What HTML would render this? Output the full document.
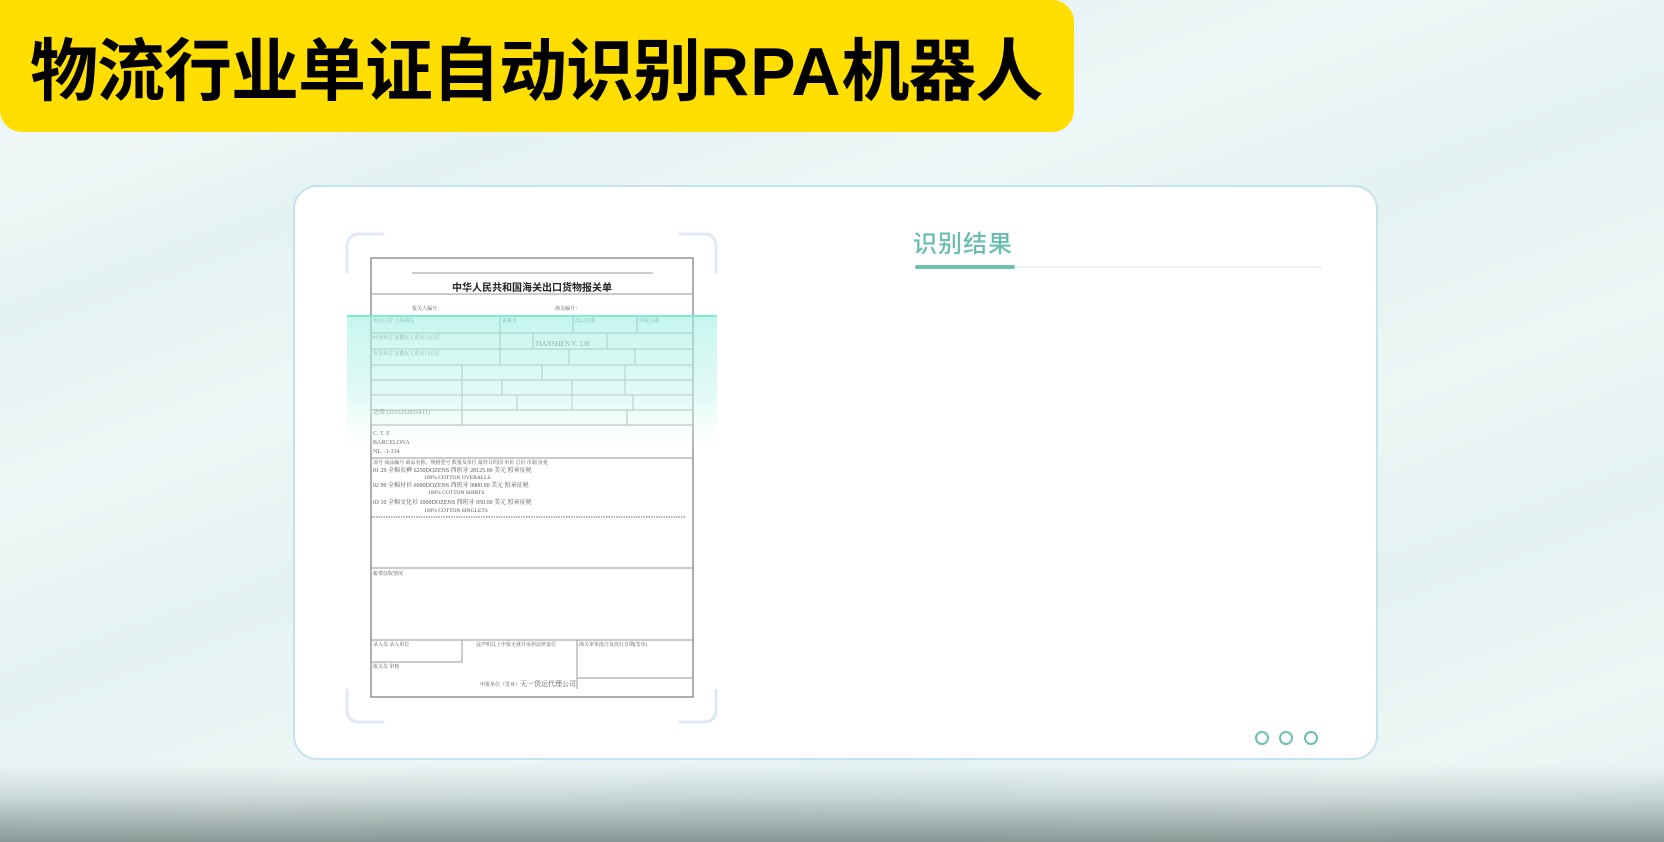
<!DOCTYPE html>
<html><head><meta charset="utf-8"><style>
html,body{margin:0;padding:0}
body{width:1664px;height:842px;position:relative;overflow:hidden;background:#e4f2f1;font-family:"Liberation Sans","Noto Sans CJK SC",sans-serif}
.bg{position:absolute;inset:0;background:
linear-gradient(160deg,rgba(255,255,255,0) 0%,rgba(255,255,255,.45) 12%,rgba(255,255,255,0) 22%,rgba(255,255,255,.35) 35%,rgba(255,255,255,0) 48%,rgba(255,255,255,.3) 62%,rgba(255,255,255,0) 75%,rgba(255,255,255,.3) 88%,rgba(255,255,255,0) 100%);}
.shade{position:absolute;left:0;right:0;top:765px;height:77px;background:linear-gradient(180deg,rgba(140,155,153,0) 0%,rgba(150,168,166,.35) 40%,rgba(120,135,133,.85) 100%)}
.banner{position:absolute;left:0;top:0;width:1074px;height:132px;background:#ffde00;border-radius:0 22px 22px 22px}
.title{position:absolute;left:30px;top:22px;font-size:68px;font-weight:bold;letter-spacing:-1px;color:#000;white-space:nowrap;line-height:88px;font-family:"Noto Sans CJK SC",sans-serif}
.title span{font-family:"Liberation Sans",sans-serif;letter-spacing:1px}
.card{position:absolute;left:293px;top:185px;width:1081px;height:571px;background:#fff;border:2px solid #c4e3ec;border-radius:24px}
.res{position:absolute;left:913px;top:224px;font-size:24px;font-weight:500;color:#6bbdaf;font-family:"Noto Sans CJK SC",sans-serif;letter-spacing:1px}
.ln{position:absolute;left:915px;top:266px;width:407px;height:2px;background:#edf1fb}
.ln2{position:absolute;left:915px;top:265px;width:100px;height:4px;background:#6dbfb0;border-radius:2px}
.dot{position:absolute;top:731px;width:10px;height:10px;border:2.5px solid #6dbfb0;border-radius:50%}
</style></head><body>
<div class="bg"></div>
<div class="shade"></div>
<div class="banner"></div>
<div class="title">物流行业单证自动识别<span>RPA</span>机器人</div>
<div class="card"></div>
<div class="res">识别结果</div>
<div class="ln"></div><div class="ln2"></div>
<div class="dot" style="left:1255px"></div>
<div class="dot" style="left:1279px"></div>
<div class="dot" style="left:1304px"></div>
<svg width="1664" height="842" style="position:absolute;left:0;top:0" font-family="Liberation Serif,Noto Serif CJK SC,serif">
<defs><linearGradient id="tg" x1="0" y1="0" x2="0" y2="1"><stop offset="0" stop-color="#9ff0e2" stop-opacity=".6"/><stop offset=".6" stop-color="#cff6ef" stop-opacity=".55"/><stop offset="1" stop-color="#ffffff" stop-opacity="0"/></linearGradient></defs>
<g fill="none" stroke="#e2e7f4" stroke-width="3" stroke-linecap="round">
<path d="M383 234 H360 Q347 234 347 247 V272"/>
<path d="M680 234 H703 Q716 234 716 247 V272"/>
<path d="M383 722 H360 Q347 722 347 709 V690"/>
<path d="M680 722 H703 Q716 722 716 709 V690"/>
</g>
<rect x="371" y="258" width="322" height="439" fill="#fff" stroke="#777" stroke-width="1.2"/>
<g stroke="#999" stroke-width="1" fill="none">
<line x1="412" y1="273" x2="653" y2="273"/>
<line x1="371" y1="294" x2="693" y2="294"/>
<line x1="371" y1="316" x2="693" y2="316"/>
<line x1="371" y1="333" x2="693" y2="333"/>
<line x1="371" y1="349" x2="693" y2="349"/>
<line x1="371" y1="365" x2="693" y2="365"/>
<line x1="371" y1="380" x2="693" y2="380"/>
<line x1="371" y1="395" x2="693" y2="395"/>
<line x1="371" y1="410" x2="693" y2="410"/>
<line x1="371" y1="425" x2="693" y2="425"/>
<path d="M500 316V333M573 316V333M637 316V333M500 333V349M533 333V349M607 333V349M500 349V365M569 349V365M635 349V365M462 365V380M542 365V380M625 365V380M462 380V395M502 380V395M572 380V395M625 380V395M462 395V410M517 395V410M572 395V410M633 395V410M462 410V425M627 410V425"/>
<line x1="371" y1="458" x2="693" y2="458"/>
<line x1="371" y1="517" x2="685" y2="517" stroke-dasharray="1.5 1" stroke="#666"/>
<line x1="371" y1="568" x2="693" y2="568"/>
<line x1="371" y1="640" x2="693" y2="640"/>
<path d="M462 640V662H371M577 640V689M577 678H693"/>
</g>
<text x="532" y="291" font-size="10" font-weight="bold" text-anchor="middle" font-family="Noto Sans CJK SC,sans-serif" fill="#222">中华人民共和国海关出口货物报关单</text>
<g font-size="5" fill="#555">
<text x="412" y="310">报关人编号：</text><text x="555" y="310">海关编号：</text>
<text x="373" y="322">出口口岸 上海海关</text><text x="502" y="322">备案号</text><text x="575" y="322">出口日期</text><text x="639" y="322">申报日期</text>
<text x="373" y="339">经营单位 安徽化工进出口公司</text><text x="535" y="346" font-size="7">TIANSHEN  Y. 138</text>
<text x="373" y="355">发货单位 安徽化工进出口公司</text>
<text x="373" y="414" font-size="6">运费 (25153126314 (1)</text>
<text x="373" y="435" font-size="6">C. T. E</text><text x="373" y="444" font-size="6">BARCELONA</text><text x="373" y="453" font-size="6">NL. :1-314</text>
<text x="373" y="464">项号 商品编号 商品名称、规格型号 数量及单位 最终目的国 单价 总价 币制 征免</text>
<text x="373" y="472" font-size="6">01  29   全棉衣裤        6250DOZENS   西班牙        28125.00  美元 照章征税</text>
<text x="424" y="479" font-size="5.5">100% COTTON OVERALLS</text>
<text x="373" y="487" font-size="6">02  99   全棉衬衫        6000DOZENS   西班牙        9900.00   美元 照章征税</text>
<text x="428" y="494" font-size="5.5">100% COTTON SHIRTS</text>
<text x="373" y="504" font-size="6">03  10   全棉文化衫      1000DOZENS   西班牙        950.00    美元 照章征税</text>
<text x="424" y="512" font-size="5.5">100% COTTON SINGLETS</text>
<text x="373" y="575">税费征收情况</text>
<text x="373" y="646">录入员  录入单位</text><text x="476" y="646">兹声明以上申报无讹并承担法律责任</text><text x="579" y="646">海关审单批注及放行日期(签章)</text>
<text x="373" y="668">报关员  审核</text>
<text x="480" y="686">申报单位（签章）<tspan font-size="7">天一货运代理公司</tspan></text>
</g>
<rect x="347" y="315" width="370" height="143" fill="url(#tg)"/>
<line x1="347" y1="316" x2="717" y2="316" stroke="#7fe9d8" stroke-width="2"/>
</svg>
</body></html>
